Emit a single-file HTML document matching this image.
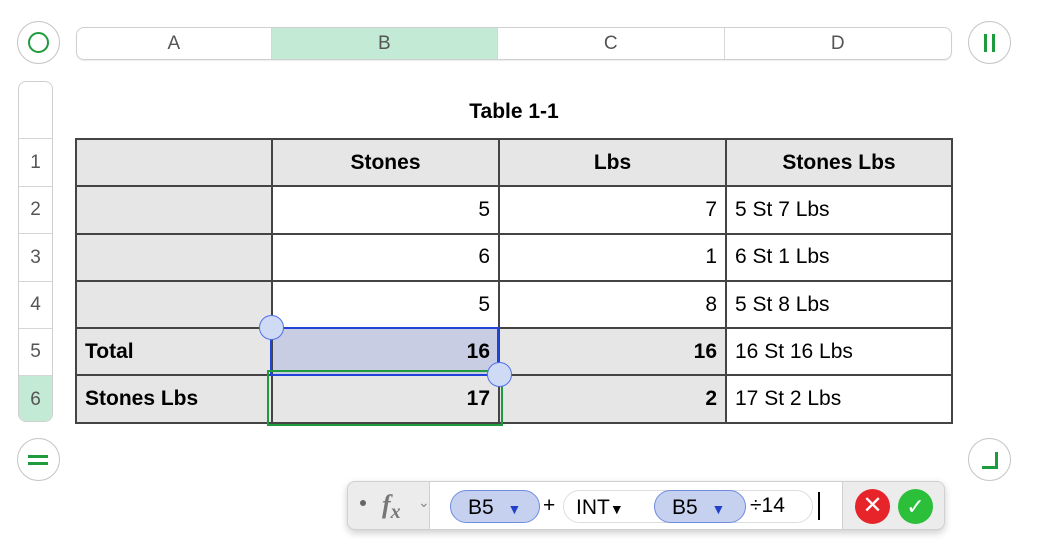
<!DOCTYPE html><html><head><style>
*{box-sizing:border-box;margin:0;padding:0}
body{width:1042px;height:556px;background:#fff;font-family:"Liberation Sans",Arial,sans-serif;position:relative;overflow:hidden}
.a{position:absolute}
.circ{position:absolute;width:43px;height:43px;border-radius:50%;border:1.5px solid #c4c4c4;background:#fff}
.colbar{left:76px;top:27px;width:876px;height:33px;border:1px solid #cfcfcf;border-radius:8px;overflow:hidden;display:flex;box-shadow:0 1px 1px rgba(0,0,0,.08)}
.colbar div{height:100%;display:flex;align-items:center;justify-content:center;color:#555;font-size:19px;border-right:1px solid #d6d6d6}
.rowbar{left:18px;top:81px;width:35px;height:341px;border:1px solid #cfcfcf;border-radius:8px;overflow:hidden}
.rowbar div{position:absolute;left:0;width:100%;display:flex;align-items:center;justify-content:center;color:#555;font-size:19px;border-top:1px solid #d6d6d6}
table{position:absolute;left:75px;top:138px;border-collapse:collapse;font-size:21px;color:#000;table-layout:fixed;width:876px}
td{border:2px solid #444;height:47.3px;padding:0 8px}
.g{background:#e6e6e6}
.r{text-align:right}.c{text-align:center}.b{font-weight:bold}
</style></head><body>
<div class="circ" style="left:17px;top:21px"><div class="a" style="left:10px;top:10px;width:21px;height:21px;border:2.5px solid #1e9b3c;border-radius:50%"></div></div>
<div class="circ" style="left:968px;top:21px"><div class="a" style="left:15px;top:12px;width:3px;height:18px;background:#1e9b3c"></div><div class="a" style="left:23px;top:12px;width:3px;height:18px;background:#1e9b3c"></div></div>
<div class="circ" style="left:17px;top:438px"><div class="a" style="left:10px;top:16px;width:20px;height:3px;background:#1e9b3c"></div><div class="a" style="left:10px;top:23px;width:20px;height:3px;background:#1e9b3c"></div></div>
<div class="circ" style="left:968px;top:438px"><div class="a" style="left:26px;top:13px;width:3px;height:17px;background:#1e9b3c"></div><div class="a" style="left:13px;top:27px;width:16px;height:3px;background:#1e9b3c"></div></div>
<div class="a colbar"><div style="width:195px">A</div><div style="width:227px;background:#c3ead4">B</div><div style="width:227px">C</div><div style="width:227px;border:none">D</div></div>
<div class="a rowbar">
<div style="top:56px;height:48px">1</div><div style="top:104px;height:47px">2</div><div style="top:151px;height:48px">3</div><div style="top:199px;height:47px">4</div><div style="top:246px;height:47px">5</div><div style="top:293px;height:48px;background:#c3ead4">6</div></div>
<div class="a b" style="left:76px;width:876px;top:100px;text-align:center;font-size:21px">Table 1-1</div>
<table>
<tr><td class="g" style="width:196px"></td><td class="g c b" style="width:227px">Stones</td><td class="g c b" style="width:227px">Lbs</td><td class="g c b" style="width:226px">Stones Lbs</td></tr>
<tr><td class="g"></td><td class="r">5</td><td class="r">7</td><td>5 St 7 Lbs</td></tr>
<tr><td class="g"></td><td class="r">6</td><td class="r">1</td><td>6 St 1 Lbs</td></tr>
<tr><td class="g"></td><td class="r">5</td><td class="r">8</td><td>5 St 8 Lbs</td></tr>
<tr><td class="g b">Total</td><td class="r b" style="background:#c8cde3">16</td><td class="g r b">16</td><td>16 St 16 Lbs</td></tr>
<tr><td class="g b">Stones Lbs</td><td class="g r b">17</td><td class="g r b">2</td><td>17 St 2 Lbs</td></tr>
</table>
<div class="a" style="left:270px;top:327px;width:229px;height:49px;border:2px solid #2342d8"></div>
<div class="a" style="left:267px;top:370px;width:236px;height:56px;border:2px solid #1e9b3c"></div>
<div class="a" style="left:259px;top:315px;width:25px;height:25px;border-radius:50%;background:#cfdaf5;border:1.5px solid #5070e8"></div>
<div class="a" style="left:487px;top:362px;width:25px;height:25px;border-radius:50%;background:#cfdaf5;border:1.5px solid #5070e8"></div>
<div class="a" style="left:347px;top:481px;width:598px;height:49px;border-radius:8px;background:#ececec;border:1px solid #d0d0d0;box-shadow:0 3px 8px rgba(0,0,0,.2);overflow:hidden">
<div class="a" style="left:12px;top:18px;width:6px;height:6px;border-radius:50%;background:#666"></div>
<div class="a" style="left:34px;top:8px;font-family:'Liberation Serif',serif;font-style:italic;font-weight:bold;font-size:26px;color:#777">f<span style="font-size:20px;position:relative;top:5px">x</span></div>
<div class="a" style="left:70px;top:12px;font-size:14px;color:#888">⌄</div>
<div class="a" style="left:81px;top:0;width:414px;height:49px;background:#fff;border-left:1px solid #d0d0d0;border-right:1px solid #d0d0d0"></div>
<div class="a" style="left:102px;top:8px;width:90px;height:33px;border-radius:17px;background:#c5d1ef;border:1.5px solid #6f8de0;font-size:21px;padding:5px 0 0 17px">B5 <span style="color:#2340c8;font-size:14px;margin-left:8px">▼</span></div>
<div class="a" style="left:195px;top:12px;font-size:21px">+</div>
<div class="a" style="left:215px;top:8px;width:250px;height:33px;border-radius:17px;border:1.5px solid #ddd;font-size:21px;padding:5px 0 0 12px">INT<span style="font-size:14px">▼</span></div>
<div class="a" style="left:306px;top:8px;width:92px;height:33px;border-radius:17px;background:#c5d1ef;border:1.5px solid #6f8de0;font-size:21px;padding:5px 0 0 17px">B5 <span style="color:#2340c8;font-size:14px;margin-left:8px">▼</span></div>
<div class="a" style="left:402px;top:12px;font-size:21px">÷14</div>
<div class="a" style="left:470px;top:10px;width:2px;height:28px;background:#000"></div>
<div class="a" style="left:507px;top:7px;width:35px;height:35px;border-radius:50%;background:#e8242b;color:#fff;font-size:24px;text-align:center;line-height:34px">✕</div>
<div class="a" style="left:550px;top:7px;width:35px;height:35px;border-radius:50%;background:#2bbf3a;color:#fff;font-size:22px;text-align:center;line-height:35px">✓</div>
</div>
</body></html>
